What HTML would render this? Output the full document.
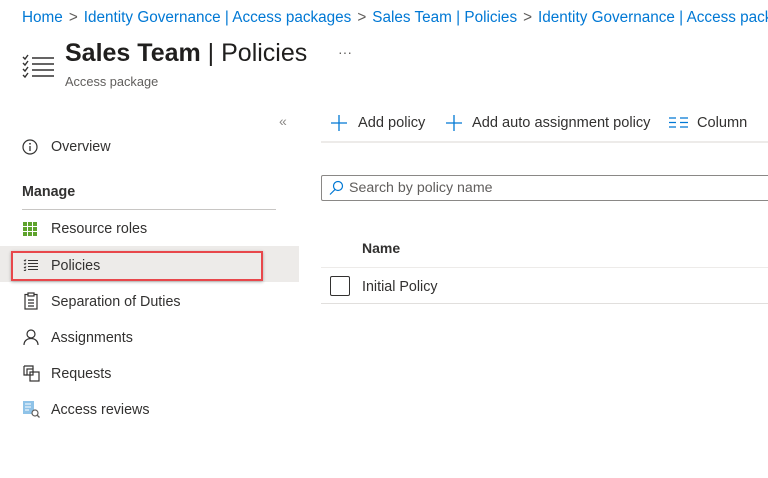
<!DOCTYPE html>
<html><head><meta charset="utf-8"><style>
*{margin:0;padding:0;box-sizing:border-box}
body{width:768px;height:478px;background:#fff;font-family:"Liberation Sans",sans-serif;color:#323130;position:relative;overflow:hidden}
.a{position:absolute;white-space:nowrap}
.bc{top:9px;left:22px;font-size:15.3px;color:#0078d4}
.bc span{color:#605e5c;margin:0 6px}
.nav{font-size:14.3px;color:#323130}
.ic{position:absolute}
</style></head><body>
<div class="a bc">Home<span>&gt;</span>Identity Governance | Access packages<span>&gt;</span>Sales Team | Policies<span>&gt;</span>Identity Governance | Access packages</div>
<svg class="ic" style="left:22px;top:53px" width="34" height="26" viewBox="0 0 34 26" stroke="#323130" fill="none" stroke-width="1.4">
<path d="M1 4l2 2 3-4M1 10l2 2 3-4M1 16l2 2 3-4M1 22l2 2 3-4"/><path d="M10 5h22M10 11h22M10 17h22M10 23h22"/></svg>
<div class="a" style="left:65px;top:39px;font-size:25px;color:#201f1e"><b style="font-weight:600">Sales Team</b> | Policies</div>
<div class="a" style="left:338px;top:44px;font-size:14px;color:#605e5c">···</div>
<div class="a" style="left:65px;top:74px;font-size:12.8px;color:#605e5c">Access package</div>
<div class="a" style="left:279px;top:113px;font-size:14px;color:#8a8886">«</div>
<svg class="ic" style="left:22px;top:139px" width="16" height="16" viewBox="0 0 16 16"><circle cx="8" cy="8" r="7" fill="none" stroke="#323130" stroke-width="1.2"/><path d="M8 7v5" stroke="#323130" stroke-width="1.3"/><circle cx="8" cy="4.8" r=".9" fill="#323130"/></svg>
<div class="a nav" style="left:51px;top:139px">Overview</div>
<div class="a" style="left:22px;top:184px;font-size:14.3px;font-weight:bold;color:#323130">Manage</div>
<div class="a" style="left:22px;top:209px;width:254px;height:1px;background:#c8c6c4"></div>
<svg class="ic" style="left:23px;top:222px" width="15" height="15" viewBox="0 0 15 15" fill="#5ea32c"><rect x="0" y="0" width="4" height="4"/><rect x="5" y="0" width="4" height="4"/><rect x="10" y="0" width="4" height="4"/><rect x="0" y="5" width="4" height="4"/><rect x="5" y="5" width="4" height="4"/><rect x="10" y="5" width="4" height="4"/><rect x="0" y="10" width="4" height="4"/><rect x="5" y="10" width="4" height="4"/><rect x="10" y="10" width="4" height="4"/></svg>
<div class="a nav" style="left:51px;top:221px">Resource roles</div>
<div class="a" style="left:0;top:246px;width:299px;height:36px;background:#edebe9"></div>
<div class="a" style="left:11px;top:251px;width:252px;height:30px;border:2px solid #e8474b;box-shadow:0 1px 3px rgba(0,0,0,.3)"></div>
<svg class="ic" style="left:23px;top:259px" width="16" height="12" viewBox="0 0 16 12" stroke="#323130" fill="none" stroke-width="1"><path d="M1 1l1 1 1-1.5M1 4.5l1 1 1-1.5M1 8l1 1 1-1.5M1 11l1 1 1-1.5M5 1.5h10M5 4.5h10M5 7.5h10M5 10.5h10"/></svg>
<div class="a nav" style="left:51px;top:258px">Policies</div>
<svg class="ic" style="left:24px;top:292px" width="14" height="18" viewBox="0 0 14 18" stroke="#323130" fill="none" stroke-width="1.2"><rect x="1" y="2.5" width="12" height="14.5"/><rect x="4" y="1" width="6" height="3" fill="#fff"/><path d="M4 8h6M4 11h6M4 14h6"/></svg>
<div class="a nav" style="left:51px;top:294px">Separation of Duties</div>
<svg class="ic" style="left:23px;top:329px" width="16" height="16" viewBox="0 0 16 16" stroke="#323130" fill="none" stroke-width="1.2"><circle cx="8" cy="5" r="4"/><path d="M1 16c0-4 3-6.5 7-6.5s7 2.5 7 6.5"/></svg>
<div class="a nav" style="left:51px;top:330px">Assignments</div>
<svg class="ic" style="left:23px;top:365px" width="17" height="17" viewBox="0 0 17 17" stroke="#323130" fill="none" stroke-width="1.2"><path d="M1 1h9v3M1 1v9h3"/><rect x="4" y="4" width="6" height="6"/><rect x="7" y="7" width="9" height="9"/></svg>
<div class="a nav" style="left:51px;top:366px">Requests</div>
<svg class="ic" style="left:23px;top:401px" width="17" height="17" viewBox="0 0 17 17"><rect x="0" y="0" width="11" height="13" fill="#8fc3e8"/><path d="M2 3h6M2 6h6M2 9h4" stroke="#fff"/><circle cx="12" cy="12" r="3" fill="#fff" stroke="#605e5c" stroke-width="1.2"/><path d="M14 14l2.5 2.5" stroke="#605e5c" stroke-width="1.3"/></svg>
<div class="a nav" style="left:51px;top:402px">Access reviews</div>
<svg class="ic" style="left:330px;top:114px" width="18" height="18" viewBox="0 0 18 18" stroke="#0078d4" stroke-width="1.3"><path d="M9 1v16M1 9h16"/></svg>
<div class="a nav" style="left:358px;top:115px;font-size:14.6px">Add policy</div>
<svg class="ic" style="left:445px;top:114px" width="18" height="18" viewBox="0 0 18 18" stroke="#0078d4" stroke-width="1.3"><path d="M9 1v16M1 9h16"/></svg>
<div class="a nav" style="left:472px;top:115px;font-size:14.6px">Add auto assignment policy</div>
<svg class="ic" style="left:669px;top:117px" width="19" height="11" viewBox="0 0 19 11" stroke="#0078d4" stroke-width="1.2"><path d="M0 1h7M0 5.5h7M0 10h7M11 1h8M11 5.5h8M11 10h8"/></svg>
<div class="a nav" style="left:697px;top:115px;font-size:14.6px">Column</div>
<div class="a" style="left:321px;top:141px;width:447px;height:2px;background:#edebe9"></div>
<div class="a" style="left:321px;top:175px;width:460px;height:26px;border:1px solid #8a8886;border-radius:2px"></div>
<svg class="ic" style="left:329px;top:180px" width="15" height="15" viewBox="0 0 15 15" stroke="#0078d4" fill="none" stroke-width="1.2"><circle cx="9" cy="6" r="4.5"/><path d="M6 9.5L1 14.5"/></svg>
<div class="a" style="left:349px;top:180px;font-size:14.2px;color:#605e5c">Search by policy name</div>
<div class="a" style="left:362px;top:240px;font-size:14px;font-weight:bold;color:#323130">Name</div>
<div class="a" style="left:321px;top:267px;width:447px;height:1px;background:#edebe9"></div>
<div class="a" style="left:330px;top:276px;width:20px;height:20px;border:1px solid #323130;border-radius:2px"></div>
<div class="a nav" style="left:362px;top:279px">Initial Policy</div>
<div class="a" style="left:321px;top:303px;width:447px;height:1px;background:#e1dfdd"></div>
</body></html>
